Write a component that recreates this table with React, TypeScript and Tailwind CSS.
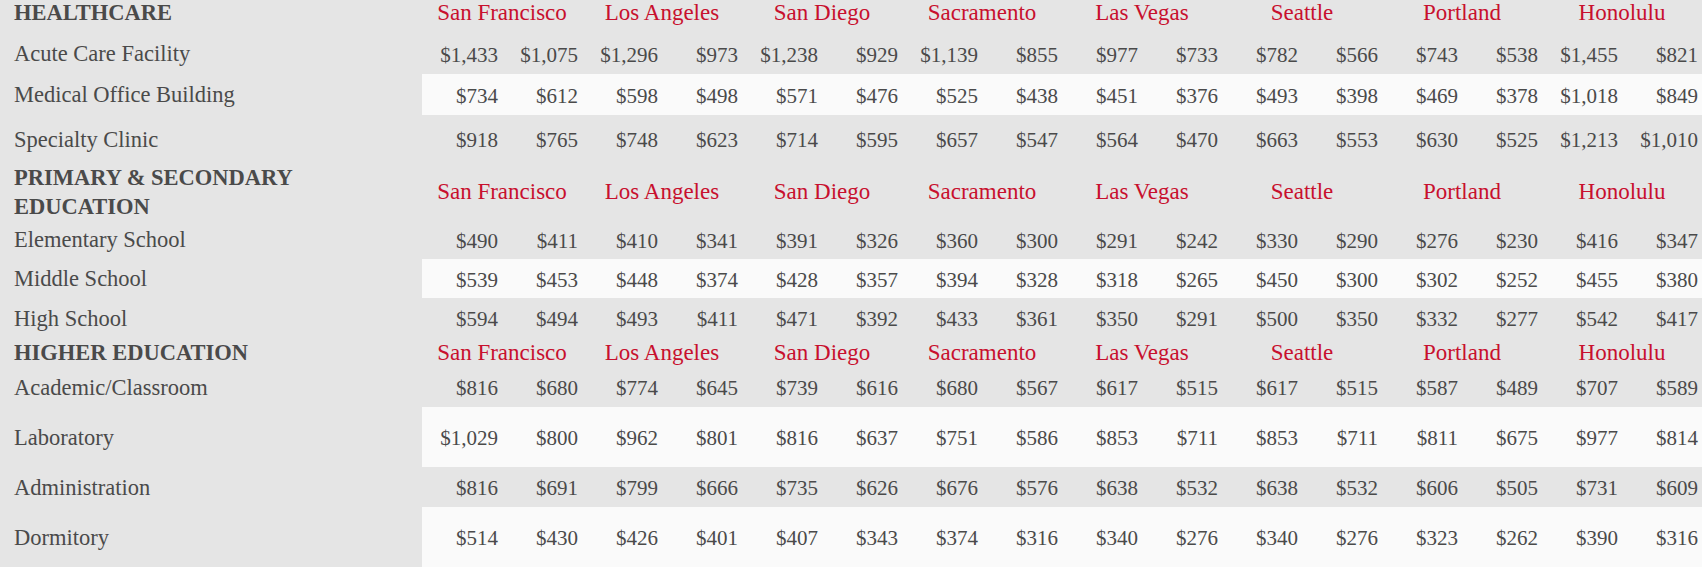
const CITIES = [
  "San Francisco",
  "Los Angeles",
  "San Diego",
  "Sacramento",
  "Las Vegas",
  "Seattle",
  "Portland",
  "Honolulu",
];

type Row = { label: string; values: string[]; height: string; striped?: boolean };
type Section = { title: string; height: string; rows: Row[] };

const v = (s: string) => s.split(" ").map((n) => `$${n}`);

const SECTIONS: Section[] = [
  {
    title: "HEALTHCARE",
    height: "h-[33px]",
    rows: [
      { label: "Acute Care Facility", height: "h-[41px]", values: v("1,433 1,075 1,296 973 1,238 929 1,139 855 977 733 782 566 743 538 1,455 821") },
      { label: "Medical Office Building", height: "h-[41px]", striped: true, values: v("734 612 598 498 571 476 525 438 451 376 493 398 469 378 1,018 849") },
      { label: "Specialty Clinic", height: "h-[48px]", values: v("918 765 748 623 714 595 657 547 564 470 663 553 630 525 1,213 1,010") },
    ],
  },
  {
    title: "PRIMARY & SECONDARY EDUCATION",
    height: "h-[57px]",
    rows: [
      { label: "Elementary School", height: "h-[39px]", values: v("490 411 410 341 391 326 360 300 291 242 330 290 276 230 416 347") },
      { label: "Middle School", height: "h-[39px]", striped: true, values: v("539 453 448 374 428 357 394 328 318 265 450 300 302 252 455 380") },
      { label: "High School", height: "h-[40px]", values: v("594 494 493 411 471 392 433 361 350 291 500 350 332 277 542 417") },
    ],
  },
  {
    title: "HIGHER EDUCATION",
    height: "h-[29px]",
    rows: [
      { label: "Academic/Classroom", height: "h-[40px]", values: v("816 680 774 645 739 616 680 567 617 515 617 515 587 489 707 589") },
      { label: "Laboratory", height: "h-[60px]", striped: true, values: v("1,029 800 962 801 816 637 751 586 853 711 853 711 811 675 977 814") },
      { label: "Administration", height: "h-[40px]", values: v("816 691 799 666 735 626 676 576 638 532 638 532 606 505 731 609") },
      { label: "Dormitory", height: "h-[60px]", striped: true, values: v("514 430 426 401 407 343 374 316 340 276 340 276 323 262 390 316") },
    ],
  },
];

function SectionHeader({ title, height, first }: { title: string; height: string; first: boolean }) {
  return (
    <div className={`flex ${height} ${first ? "items-start" : "items-center"}`}>
      <div className="w-[422px] shrink-0 pl-[14px]">
        <div className={`w-[330px] text-[22.5px] font-bold text-[#4a4a4a] ${first ? "leading-[26px]" : "leading-[29px]"}`}>
          {title}
        </div>
      </div>
      <div className="grid grid-cols-[repeat(8,160px)]">
        {CITIES.map((city) => (
          <div key={city} className="text-center text-[23px] leading-[26px] text-[#c8102e]">
            {city}
          </div>
        ))}
      </div>
    </div>
  );
}

function DataRow({ row }: { row: Row }) {
  return (
    <div className={`flex ${row.height}`}>
      <div className="flex w-[422px] shrink-0 items-center pl-[14px] pt-[1px] text-[22.5px] text-[#4a4a4a]">
        {row.label}
      </div>
      <div className={`grid grid-cols-[repeat(16,80px)] items-center ${row.striped ? "bg-[#fafafa]" : ""}`}>
        {row.values.map((val, i) => (
          <div key={i} className="pr-[4px] pt-[2px] text-right text-[21px] leading-[24px] text-[#4a4a4a]">
            {val}
          </div>
        ))}
      </div>
    </div>
  );
}

export default function App() {
  return (
    <div className="h-[567px] w-[1702px] overflow-hidden bg-[#e5e5e5] font-['Liberation_Serif','Times_New_Roman',serif]">
      {SECTIONS.map((section, si) => (
        <div key={section.title}>
          <SectionHeader title={section.title} height={section.height} first={si === 0} />
          {section.rows.map((row) => (
            <DataRow key={row.label} row={row} />
          ))}
        </div>
      ))}
    </div>
  );
}
